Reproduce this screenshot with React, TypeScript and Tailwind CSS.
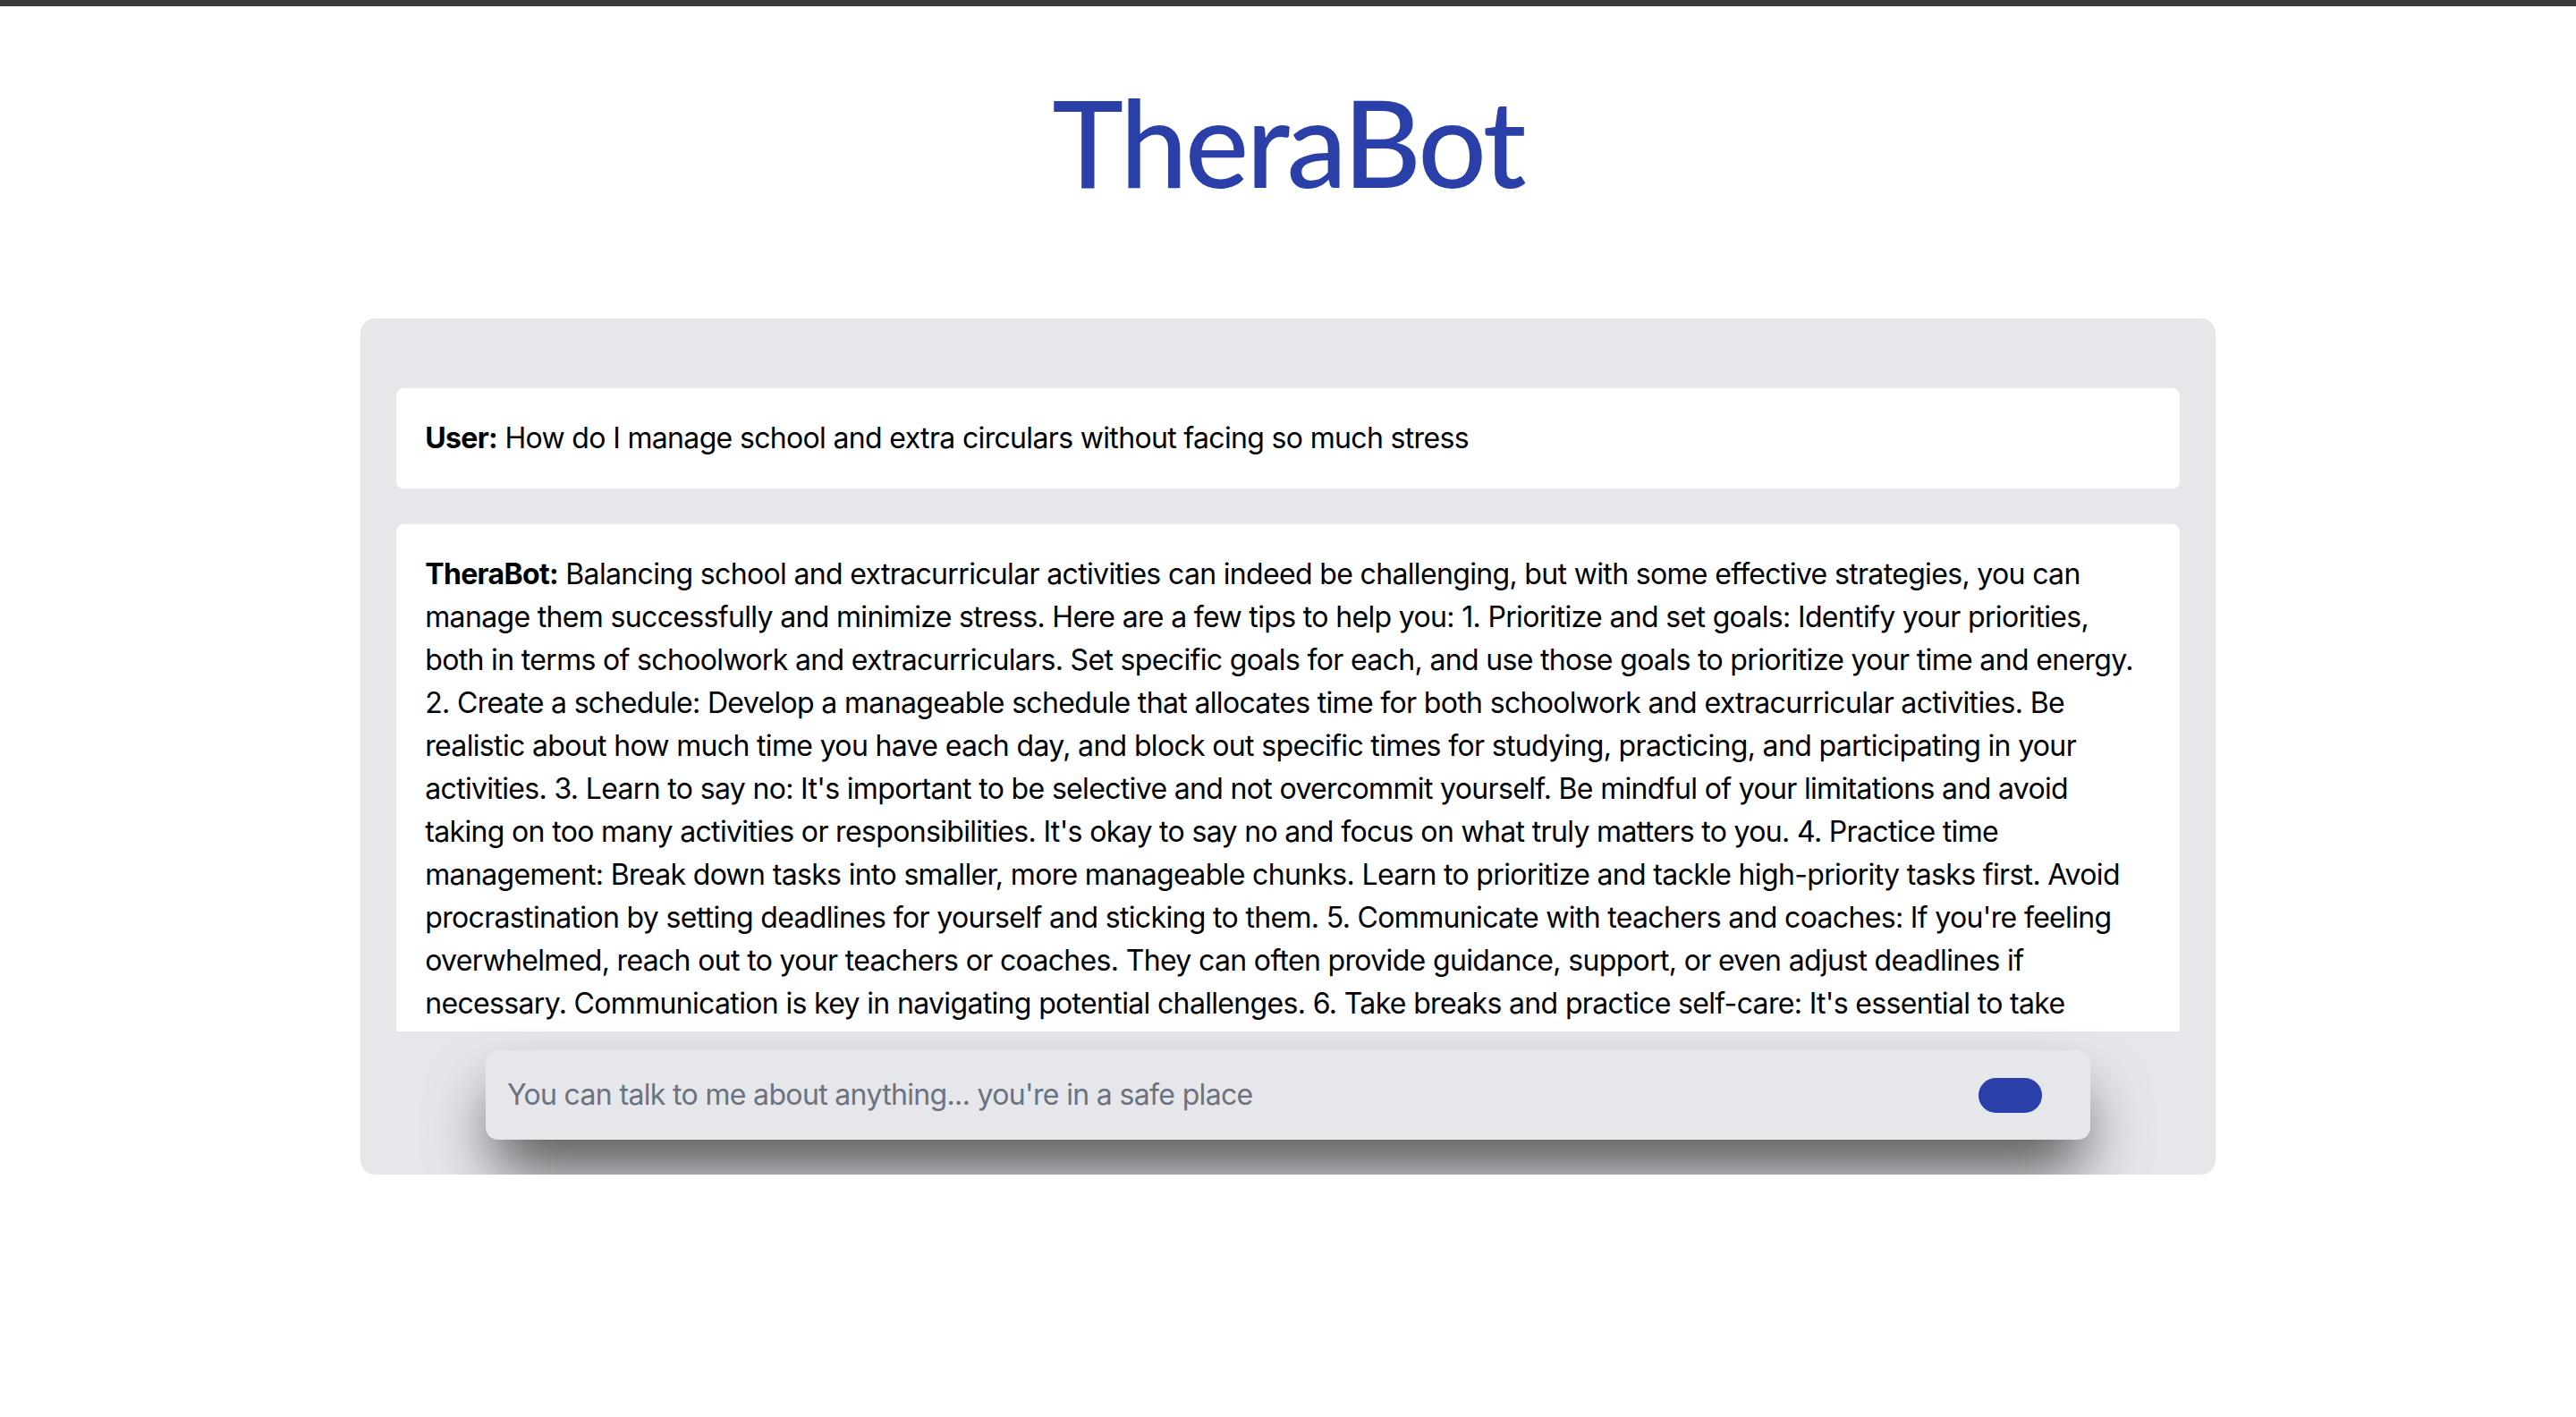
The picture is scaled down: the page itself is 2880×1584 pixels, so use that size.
import { useState } from "react";

interface Message {
  sender: string;
  text: string;
}

const messages: Message[] = [
  {
    sender: "User",
    text: "How do I manage school and extra circulars without facing so much stress",
  },
  {
    sender: "TheraBot",
    text: "Balancing school and extracurricular activities can indeed be challenging, but with some effective strategies, you can manage them successfully and minimize stress. Here are a few tips to help you: 1. Prioritize and set goals: Identify your priorities, both in terms of schoolwork and extracurriculars. Set specific goals for each, and use those goals to prioritize your time and energy. 2. Create a schedule: Develop a manageable schedule that allocates time for both schoolwork and extracurricular activities. Be realistic about how much time you have each day, and block out specific times for studying, practicing, and participating in your activities. 3. Learn to say no: It's important to be selective and not overcommit yourself. Be mindful of your limitations and avoid taking on too many activities or responsibilities. It's okay to say no and focus on what truly matters to you. 4. Practice time management: Break down tasks into smaller, more manageable chunks. Learn to prioritize and tackle high-priority tasks first. Avoid procrastination by setting deadlines for yourself and sticking to them. 5. Communicate with teachers and coaches: If you're feeling overwhelmed, reach out to your teachers or coaches. They can often provide guidance, support, or even adjust deadlines if necessary. Communication is key in navigating potential challenges. 6. Take breaks and practice self-care: It's essential to take regular breaks and make time for activities that help you relax and recharge. Get enough sleep, eat well, and stay active. 7. Ask for help: Don't hesitate to reach out to friends, family, or a counselor if you're feeling overwhelmed. Remember, it's okay to ask for support.",
  },
];

export default function App() {
  const [input, setInput] = useState("");

  return (
    <div className="min-h-screen bg-white font-['Inter',sans-serif] text-black">
      <div className="h-[7px] bg-[#3b3b3b]" />
      <h1 className="mt-[84px] text-center font-['Lato',sans-serif] text-[135px] font-medium leading-[135px] tracking-[-3px] text-[#2a3fa8]">
        TheraBot
      </h1>

      <div className="mx-auto mt-[130px] flex h-[957px] w-[72%] flex-col overflow-hidden rounded-[16px] bg-[#e5e7eb] px-[40px] pt-[78px] pb-[39px]">
        <div className="flex-1 overflow-hidden">
          {messages.map((m, i) => (
            <div
              key={i}
              className="mb-[40px] rounded-[8px] bg-white p-[32px] text-[32px] leading-[48px] tracking-[-0.66px]"
            >
              <strong className="font-bold">{m.sender}:</strong> {m.text}
            </div>
          ))}
        </div>

        <form
          onSubmit={(e) => {
            e.preventDefault();
            setInput("");
          }}
          className="mx-auto mt-[21px] flex h-[100px] w-[90%] items-center rounded-[14px] bg-[#e5e7eb] pl-[24px] pr-[54px] shadow-[0_40px_70px_-10px_rgba(0,0,0,0.7)]"
        >
          <input
            value={input}
            onChange={(e) => setInput(e.target.value)}
            placeholder="You can talk to me about anything... you're in a safe place"
            className="flex-1 bg-transparent text-[32px] tracking-[-0.66px] text-black outline-none placeholder:text-[#6b7280]"
          />
          <button type="submit" className="h-[39px] w-[71px] rounded-full bg-[#2a3fa8]" />
        </form>
      </div>
    </div>
  );
}
